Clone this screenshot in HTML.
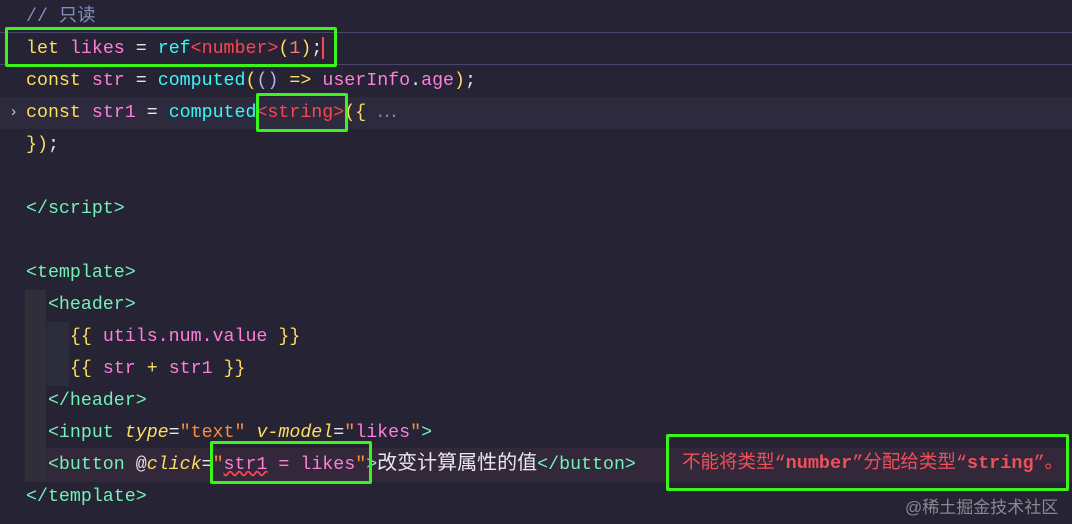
<!DOCTYPE html>
<html><head><meta charset="utf-8"><style>
body{margin:0;width:1072px;height:524px;overflow:hidden;background:#262335;position:relative;font-family:"Liberation Mono","Noto Sans CJK SC",monospace;font-size:18.3px;}
.l{position:absolute;left:0;width:1072px;height:32px;line-height:32px;white-space:pre;padding-left:26px;box-sizing:border-box;}
.k{color:#fede5d}.v{color:#ff7edb}.f{color:#36f9f6}.t{color:#fe4450}.n{color:#f97e72}.g{color:#72f1b8}.a{color:#fede5d;font-style:italic}.s{color:#ff8b39}.c{color:#848bbd}.w{color:#e6e6f0}.p{color:#ff7edb}
.box{position:absolute;border:3px solid #3cf31c;border-radius:2px;box-sizing:border-box}
</style></head><body>
<div style="position:absolute;left:0;top:32px;width:1072px;height:33px;border-top:1px solid #4a4568;border-bottom:1px solid #4a4568;box-sizing:border-box"></div>
<div style="position:absolute;left:0;top:97px;width:1072px;height:32px;background:#2c2a3c"></div>
<div style="position:absolute;left:25px;top:448px;width:1047px;height:34px;background:#32283a"></div>
<div style="position:absolute;left:25px;top:290px;width:21px;height:192px;background:#302e38"></div>
<div style="position:absolute;left:47px;top:322px;width:22px;height:64px;background:#2b2d3a"></div>
<div class="l" style="top:1px"><span class="c">// 只读</span></div>
<div class="l" style="top:33px"><span class="k">let</span> <span class="v">likes</span> <span class="w">=</span> <span class="f">ref</span><span class="t">&lt;number&gt;</span><span class="k">(</span><span class="n">1</span><span class="k">)</span><span class="w">;</span><span style="display:inline-block;width:2px;height:22px;background:#fe4450;vertical-align:middle"></span></div>
<div class="l" style="top:65px"><span class="k">const</span> <span class="v">str</span> <span class="w">=</span> <span class="f">computed</span><span class="k">(</span><span style="color:#b6b1f0">()</span> <span class="k">=&gt;</span> <span class="v">userInfo</span><span class="w">.</span><span class="v">age</span><span class="k">)</span><span class="w">;</span></div>
<div class="l" style="top:97px"><span class="k">const</span> <span class="v">str1</span> <span class="w">=</span> <span class="f">computed</span><span class="t">&lt;string&gt;</span><span class="k">({</span> <span class="c">⋯</span></div>
<div style="position:absolute;left:9px;top:104px;color:#ccc;font-size:15px">›</div>
<div class="l" style="top:129px"><span class="k">})</span><span class="w">;</span></div>
<div class="l" style="top:193px"><span class="g">&lt;/script&gt;</span></div>
<div class="l" style="top:257px"><span class="g">&lt;template&gt;</span></div>
<div class="l" style="top:289px"><span class="g">  &lt;header&gt;</span></div>
<div class="l" style="top:321px">    <span class="k">{{</span> <span class="v">utils.num.value</span> <span class="k">}}</span></div>
<div class="l" style="top:353px">    <span class="k">{{</span> <span class="v">str</span> <span class="k">+</span> <span class="v">str1</span> <span class="k">}}</span></div>
<div class="l" style="top:385px"><span class="g">  &lt;/header&gt;</span></div>
<div class="l" style="top:417px">  <span class="g">&lt;input</span> <span class="a">type</span><span class="w">=</span><span class="s">"text"</span> <span class="a">v-model</span><span class="w">=</span><span class="s">"</span><span class="v">likes</span><span class="s">"</span><span class="g">&gt;</span></div>
<div class="l" style="top:449px">  <span class="g">&lt;button</span> <span class="w">@</span><span class="a">click</span><span class="w">=</span><span class="s">"</span><span class="v" style="text-decoration:underline wavy #fe4450">str1</span><span class="v"> = likes</span><span class="s">"</span><span class="g">&gt;</span><span class="w" style="font-size:20px">改变计算属性的值</span><span class="g">&lt;/button&gt;</span></div>
<div class="l" style="top:481px"><span class="g">&lt;/template&gt;</span></div>
<div style="position:absolute;left:682px;top:448px;line-height:32px;color:#f0505a;font-size:18.5px;white-space:pre">不能将类型“<b>number</b>”分配给类型“<b>string</b>”。</div>
<div style="position:absolute;left:905px;top:493px;color:#8a8890;font-size:17px;font-family:'Liberation Sans','Noto Sans CJK SC',sans-serif">@稀土掘金技术社区</div>
<div class="box" style="left:5px;top:27px;width:332px;height:40px"></div>
<div class="box" style="left:256px;top:93px;width:92px;height:39px"></div>
<div class="box" style="left:210px;top:441px;width:162px;height:43px"></div>
<div class="box" style="left:666px;top:434px;width:403px;height:57px"></div>
</body></html>
